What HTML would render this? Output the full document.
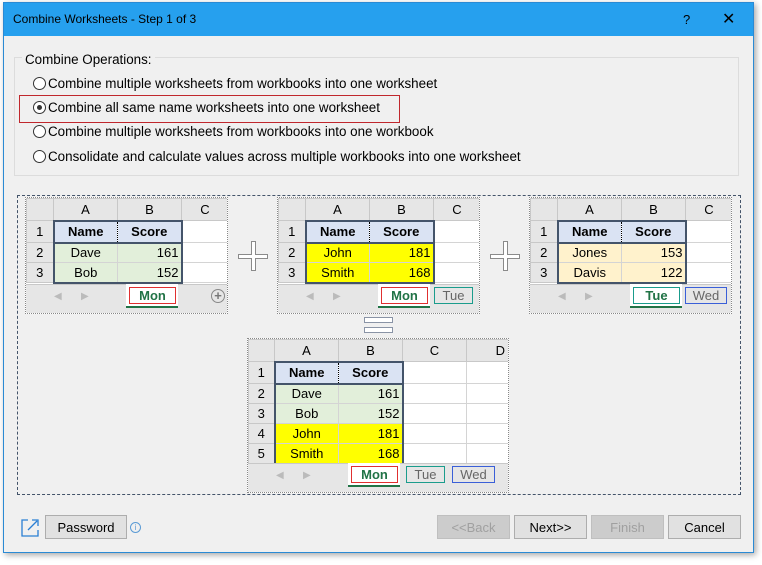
<!DOCTYPE html>
<html><head><meta charset="utf-8"><style>
*{margin:0;padding:0;box-sizing:border-box}
body{width:762px;height:565px;background:#fff;font-family:"Liberation Sans",sans-serif;font-size:13px;color:#000;position:relative;overflow:hidden}
.win{position:absolute;left:3px;top:2px;width:751px;height:551px;background:#f0f0f0;border:1px solid #2a8ad4;box-shadow:2px 2px 6px rgba(0,0,0,.35)}
.title{position:absolute;left:0;top:0;right:0;height:33px;background:#26a0ee;}
.abs{position:absolute}
.group{position:absolute;left:14px;top:57px;width:725px;height:119px;border:1px solid #dcdcdc}
.radio{position:absolute;left:29px;width:13px;height:13px;border:1px solid #333;border-radius:50%;background:#fff}
.rl{position:absolute;left:48px;font-size:13.4px;white-space:nowrap}
.sheet{position:absolute;border:1px dotted #888;background:#fff;overflow:hidden}
.sheet table{border-collapse:collapse;table-layout:fixed;font-size:13px}
.sheet td{border:1px solid #d4d4d4;text-align:center;height:20px;padding:0 2px;overflow:hidden;white-space:nowrap}
.sheet tr.h td{background:#e6e6e6;height:22px;border-color:#c8c8c8}
.sheet td.rh{background:#e6e6e6;border-color:#c8c8c8}
.sheet td.nm{background:#dae3f3;font-weight:bold;height:22px}
.g{background:#e2efda}.y{background:#ffff00}.o{background:#fff2cc}
.r{text-align:right!important}
.tabs{position:absolute;left:0;right:0;bottom:0;height:29px;background:#e6e6e6;border-top:1px solid #c8c8c8}
.tab{position:absolute;top:2px;height:17px;font-size:13px;text-align:center;line-height:15px}
.btn{position:absolute;top:515px;height:24px;border:1px solid #adadad;background:#e1e1e1;text-align:center;line-height:23px;font-size:13px}
.dis{color:#a0a0a0;background:#cccccc;border-color:#bfbfbf}
</style></head><body>
<div class="win">
<div class="title"><span class="abs" style="left:9px;top:9px;font-size:12px">Combine Worksheets - Step 1 of 3</span>
<span class="abs" style="left:679px;top:9px;font-size:13px">?</span>
<span class="abs" style="left:718px;top:6px;font-size:16px">✕</span></div>
</div>
<div class="group"></div>
<div class="abs" style="left:22px;top:52px;background:#f0f0f0;padding:0 3px;font-size:13.4px">Combine Operations:</div>
<div class="abs" style="left:19px;top:95px;width:381px;height:28px;border:1px solid #c0272d"></div>
<div class="radio" style="top:77px;left:33px"></div><div class="rl" style="top:76px">Combine multiple worksheets from workbooks into one worksheet</div>
<div class="radio" style="top:101px;left:33px"><div style="position:absolute;left:3px;top:3px;width:5px;height:5px;border-radius:50%;background:#333"></div></div><div class="rl" style="top:100px">Combine all same name worksheets into one worksheet</div>
<div class="radio" style="top:125px;left:33px"></div><div class="rl" style="top:124px">Combine multiple worksheets from workbooks into one workbook</div>
<div class="radio" style="top:150px;left:33px"></div><div class="rl" style="top:149px">Consolidate and calculate values across multiple workbooks into one worksheet</div>

<div class="abs" style="left:17px;top:195px;width:724px;height:300px;border:1px dashed #44546a"></div>

<!-- sheet 1 -->
<div class="sheet" style="left:25px;top:197px;width:203px;height:117px">
<table style="width:202px"><colgroup><col style="width:27px"><col style="width:64px"><col style="width:64px"><col style="width:47px"></colgroup>
<tr class="h"><td></td><td>A</td><td>B</td><td>C</td></tr>
<tr><td class="rh">1</td><td class="nm" style="border:2px solid #44546a;border-right:1px dotted #000">Name</td><td class="nm" style="border:2px solid #44546a;border-left:none">Score</td><td></td></tr>
<tr><td class="rh">2</td><td class="g" style="border-left:2px solid #44546a;border-bottom:1px dotted #000;border-right:1px dotted #000">Dave</td><td class="g r" style="border-right:2px solid #44546a;border-bottom:1px dotted #000">161</td><td></td></tr>
<tr><td class="rh">3</td><td class="g" style="border-left:2px solid #44546a;border-bottom:2px solid #44546a;border-right:1px dotted #000">Bob</td><td class="g r" style="border-right:2px solid #44546a;border-bottom:2px solid #44546a">152</td><td></td></tr>
</table>
<div class="tabs"><span class="abs" style="left:28px;top:6px;color:#bbb;font-size:10px">◀</span><span class="abs" style="left:55px;top:6px;color:#bbb;font-size:10px">▶</span>
<div class="abs" style="left:100px;top:-1px;width:52px;height:24px;background:#fff;border-bottom:2px solid #217346"></div>
<div class="tab" style="left:103px;width:47px;border:1px solid #e03030;color:#217346;font-weight:bold">Mon</div>
<span class="abs" style="left:185px;top:4px;width:14px;height:14px;border:1px solid #888;border-radius:50%;text-align:center;line-height:11px;color:#777;font-weight:bold">+</span></div>
</div>
<div class="abs" style="left:238px;top:254px;width:30px;height:5px;border:1px solid #8a8a8a;background:#fff"></div>
<div class="abs" style="left:251px;top:241px;width:5px;height:30px;border:1px solid #8a8a8a;background:#fff"></div>
<div class="abs" style="left:239px;top:255px;width:28px;height:3px;background:#fff"></div>

<!-- sheet 2 -->
<div class="sheet" style="left:277px;top:197px;width:203px;height:117px">
<table style="width:202px"><colgroup><col style="width:27px"><col style="width:64px"><col style="width:64px"><col style="width:47px"></colgroup>
<tr class="h"><td></td><td>A</td><td>B</td><td>C</td></tr>
<tr><td class="rh">1</td><td class="nm" style="border:2px solid #44546a;border-right:1px dotted #000">Name</td><td class="nm" style="border:2px solid #44546a;border-left:none">Score</td><td></td></tr>
<tr><td class="rh">2</td><td class="y" style="border-left:2px solid #44546a;border-bottom:1px dotted #000;border-right:1px dotted #000">John</td><td class="y r" style="border-right:2px solid #44546a;border-bottom:1px dotted #000">181</td><td></td></tr>
<tr><td class="rh">3</td><td class="y" style="border-left:2px solid #44546a;border-bottom:2px solid #44546a;border-right:1px dotted #000">Smith</td><td class="y r" style="border-right:2px solid #44546a;border-bottom:2px solid #44546a">168</td><td></td></tr>
</table>
<div class="tabs"><span class="abs" style="left:28px;top:6px;color:#bbb;font-size:10px">◀</span><span class="abs" style="left:55px;top:6px;color:#bbb;font-size:10px">▶</span>
<div class="abs" style="left:100px;top:-1px;width:52px;height:24px;background:#fff;border-bottom:2px solid #217346"></div>
<div class="tab" style="left:103px;width:47px;border:1px solid #e03030;color:#217346;font-weight:bold">Mon</div>
<div class="tab" style="left:156px;width:39px;border:1px solid #1a9c8c;color:#666">Tue</div></div>
</div>
<div class="abs" style="left:490px;top:254px;width:30px;height:5px;border:1px solid #8a8a8a;background:#fff"></div>
<div class="abs" style="left:503px;top:241px;width:5px;height:30px;border:1px solid #8a8a8a;background:#fff"></div>
<div class="abs" style="left:491px;top:255px;width:28px;height:3px;background:#fff"></div>

<!-- sheet 3 -->
<div class="sheet" style="left:529px;top:197px;width:203px;height:117px">
<table style="width:202px"><colgroup><col style="width:27px"><col style="width:64px"><col style="width:64px"><col style="width:47px"></colgroup>
<tr class="h"><td></td><td>A</td><td>B</td><td>C</td></tr>
<tr><td class="rh">1</td><td class="nm" style="border:2px solid #44546a;border-right:1px dotted #000">Name</td><td class="nm" style="border:2px solid #44546a;border-left:none">Score</td><td></td></tr>
<tr><td class="rh">2</td><td class="o" style="border-left:2px solid #44546a;border-bottom:1px dotted #000;border-right:1px dotted #000">Jones</td><td class="o r" style="border-right:2px solid #44546a;border-bottom:1px dotted #000">153</td><td></td></tr>
<tr><td class="rh">3</td><td class="o" style="border-left:2px solid #44546a;border-bottom:2px solid #44546a;border-right:1px dotted #000">Davis</td><td class="o r" style="border-right:2px solid #44546a;border-bottom:2px solid #44546a">122</td><td></td></tr>
</table>
<div class="tabs"><span class="abs" style="left:28px;top:6px;color:#bbb;font-size:10px">◀</span><span class="abs" style="left:55px;top:6px;color:#bbb;font-size:10px">▶</span>
<div class="abs" style="left:100px;top:-1px;width:52px;height:24px;background:#fff;border-bottom:2px solid #217346"></div>
<div class="tab" style="left:103px;width:47px;border:1px solid #1a9c8c;color:#217346;font-weight:bold">Tue</div>
<div class="tab" style="left:155px;width:42px;border:1px solid #3a5fd8;color:#666">Wed</div></div>
</div>

<!-- equals -->
<div class="abs" style="left:364px;top:317px;width:29px;height:6px;border:1px solid #8a94a6;background:#fff"></div>
<div class="abs" style="left:364px;top:327px;width:29px;height:6px;border:1px solid #8a94a6;background:#fff"></div>

<!-- sheet 4 -->
<div class="sheet" style="left:247px;top:338px;width:262px;height:155px">
<table style="width:261px"><colgroup><col style="width:26px"><col style="width:64px"><col style="width:64px"><col style="width:64px"><col style="width:43px"></colgroup>
<tr class="h"><td></td><td>A</td><td>B</td><td>C</td><td style="text-align:right;padding-right:4px">D</td></tr>
<tr><td class="rh">1</td><td class="nm" style="border:2px solid #44546a;border-right:1px dotted #000">Name</td><td class="nm" style="border:2px solid #44546a;border-left:none">Score</td><td></td><td></td></tr>
<tr><td class="rh">2</td><td class="g" style="border-left:2px solid #44546a;border-bottom:1px dotted #000;border-right:1px dotted #000">Dave</td><td class="g r" style="border-right:2px solid #44546a;border-bottom:1px dotted #000">161</td><td></td><td></td></tr>
<tr><td class="rh">3</td><td class="g" style="border-left:2px solid #44546a;border-bottom:1px dotted #000;border-right:1px dotted #000">Bob</td><td class="g r" style="border-right:2px solid #44546a;border-bottom:1px dotted #000">152</td><td></td><td></td></tr>
<tr><td class="rh">4</td><td class="y" style="border-left:2px solid #44546a;border-bottom:1px dotted #000;border-right:1px dotted #000">John</td><td class="y r" style="border-right:2px solid #44546a;border-bottom:1px dotted #000">181</td><td></td><td></td></tr>
<tr><td class="rh">5</td><td class="y" style="border-left:2px solid #44546a;border-bottom:2px solid #44546a;border-right:1px dotted #000">Smith</td><td class="y r" style="border-right:2px solid #44546a;border-bottom:2px solid #44546a">168</td><td></td><td></td></tr>
</table>
<div class="tabs"><span class="abs" style="left:28px;top:6px;color:#bbb;font-size:10px">◀</span><span class="abs" style="left:55px;top:6px;color:#bbb;font-size:10px">▶</span>
<div class="abs" style="left:100px;top:-1px;width:52px;height:24px;background:#fff;border-bottom:2px solid #217346"></div>
<div class="tab" style="left:103px;width:47px;border:1px solid #e03030;color:#217346;font-weight:bold">Mon</div>
<div class="tab" style="left:158px;width:39px;border:1px solid #1a9c8c;color:#666">Tue</div>
<div class="tab" style="left:204px;width:43px;border:1px solid #3a5fd8;color:#666">Wed</div></div>
</div>

<!-- bottom -->
<svg class="abs" style="left:20px;top:518px" width="20" height="20" viewBox="0 0 20 20"><path d="M8 2H2v16h16v-6" fill="none" stroke="#2a7fd4" stroke-width="1.3"/><path d="M8 12L17 3M12 2h6v6" fill="none" stroke="#2a7fd4" stroke-width="1.3"/></svg>
<div class="btn" style="left:45px;width:82px;">Password</div>
<div class="abs" style="left:130px;top:522px;width:11px;height:11px;border:1px solid #5b9bd5;border-radius:50%;font-size:8px;color:#5b9bd5;text-align:center;line-height:9px">i</div>
<div class="btn dis" style="left:437px;width:73px">&lt;&lt;Back</div>
<div class="btn" style="left:514px;width:73px">Next&gt;&gt;</div>
<div class="btn dis" style="left:591px;width:73px">Finish</div>
<div class="btn" style="left:668px;width:73px">Cancel</div>
</body></html>
